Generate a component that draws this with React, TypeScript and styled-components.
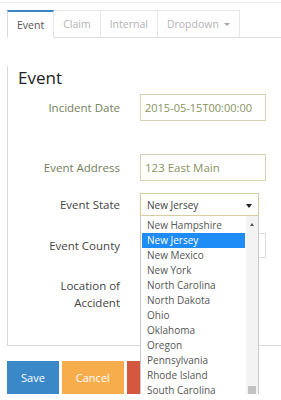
import styled, { createGlobalStyle } from "styled-components";

const GlobalStyle = createGlobalStyle`
    html, body {
        margin: 0;
        padding: 0;
        background: #fff;
        overflow: hidden;
    }

    body {
        font-family: "Open Sans", "DejaVu Sans", sans-serif;
        font-size: 11px;
        color: #444;
    }
`;

const states = [
    "New Hampshire",
    "New Jersey",
    "New Mexico",
    "New York",
    "North Carolina",
    "North Dakota",
    "Ohio",
    "Oklahoma",
    "Oregon",
    "Pennsylvania",
    "Rhode Island",
    "South Carolina",
];

const tabs = ["Event", "Claim", "Internal", "Dropdown"];

export default function App() {
    return (
        <>
            <GlobalStyle/>
            <TopRule/>
            <Page>
                <TabList>
                    {tabs.map((t, i) => (
                        <Tab key={t} $active={i === 0}>
                            {t}
                            {t === "Dropdown" && <Caret/>}
                        </Tab>
                    ))}
                </TabList>

                <Panel>
                    <Heading>Event</Heading>

                    <Row $top={5} $height={27}>
                        <Label $tone="olive">Incident Date</Label>
                        <TextInput $tone="olive" readOnly value="2015-05-15T00:00:00"/>
                    </Row>

                    <Row $top={33} $height={27}>
                        <Label $tone="olive">Event Address</Label>
                        <TextInput $tone="olive" $size={11.5} readOnly value="123 East Main"/>
                    </Row>

                    <Row $top={12} $height={23}>
                        <Label>Event State</Label>
                        <SelectWrap>
                            <SelectBox>
                                New Jersey
                                <SelectArrow/>
                            </SelectBox>
                            <OptionList>
                                {states.map((s) => (
                                    <Option key={s} $selected={s === "New Jersey"}>{s}</Option>
                                ))}
                                <ScrollTrack>
                                    <ScrollUp/>
                                    <ScrollThumb/>
                                </ScrollTrack>
                            </OptionList>
                        </SelectWrap>
                    </Row>

                    <Row $top={17} $height={25}>
                        <Label>Event County</Label>
                        <TextInput readOnly value=""/>
                    </Row>

                    <Row $top={19} $height={34}>
                        <Label>Location of Accident</Label>
                    </Row>
                </Panel>

                <Buttons>
                    <Button $bg="#3b88c8">Save</Button>
                    <Button $bg="#f7ad4c">Cancel</Button>
                    <Button $bg="#d4573f" $width={60}/>
                </Buttons>
            </Page>
        </>
    );
}

const TopRule = styled.div`
    height: 2px;
    border-bottom: 1px solid #ececec;
`;

const Page = styled.div`
    padding: 7px 0 0 7px;
`;

const TabList = styled.ul`
    display: flex;
    margin: 0;
    padding: 0;
    list-style: none;
    border-bottom: 1px solid #dedede;
    height: 27px;
`;

const Tab = styled.li<{ $active?: boolean }>`
    box-sizing: border-box;
    height: 28px;
    display: flex;
    align-items: center;
    padding: 0 9px;
    margin-bottom: -1px;
    font-size: 10.5px;
    border: 1px solid #e6e6e6;
    border-left: ${p => p.$active ? "1px solid #dadada" : "none"};
    border-top: ${p => p.$active ? "2px solid #3a87c8" : "1px solid #e6e6e6"};
    border-bottom: 1px solid ${p => p.$active ? "#fff" : "#dedede"};
    color: ${p => p.$active ? "#555" : "#b3b3b3"};
    background: #fff;
    white-space: nowrap;
`;

const Caret = styled.span`
    display: inline-block;
    margin-left: 5px;
    width: 0;
    height: 0;
    border-left: 3px solid transparent;
    border-right: 3px solid transparent;
    border-top: 3px solid #a8a8a8;
`;

const Panel = styled.div`
    border-left: 1px solid #dadada;
    border-bottom: 1px solid #dadada;
    padding: 0 0 34px 10px;
`;

const Heading = styled.h2`
    margin: 28px 0 0;
    font-size: 17px;
    line-height: 23px;
    font-weight: 400;
    color: #222;
`;

const Row = styled.div<{ $top: number; $height: number }>`
    display: flex;
    align-items: center;
    gap: 20px;
    margin-top: ${p => p.$top}px;
    height: ${p => p.$height}px;
`;

const Label = styled.label<{ $tone?: "olive" }>`
    flex: 0 0 102px;
    text-align: right;
    font-size: 11.5px;
    line-height: 17px;
    color: ${p => p.$tone === "olive" ? "#737e5c" : "#444"};
`;

const TextInput = styled.input<{ $tone?: "olive"; $size?: number }>`
    box-sizing: border-box;
    width: 126px;
    height: 100%;
    padding: 0 4px;
    margin: 0;
    font: inherit;
    font-size: ${p => p.$size ?? 11}px;
    color: ${p => p.$tone === "olive" ? "#89925e" : "#555"};
    border: 1px solid ${p => p.$tone === "olive" ? "#d5d3b2" : "#dcdcdc"};
    border-radius: 0;
    outline: none;
    background: #fff;
`;

const SelectWrap = styled.div`
    position: relative;
    width: 119px;
    height: 100%;
`;

const SelectBox = styled.div`
    box-sizing: border-box;
    height: 100%;
    display: flex;
    align-items: center;
    padding: 0 6px;
    font-size: 10px;
    color: #444;
    border: 1px solid #d9cca2;
    box-shadow: 0 1px 1px rgba(170, 150, 90, 0.25);
    position: relative;
`;

const SelectArrow = styled.span`
    position: absolute;
    right: 6px;
    top: 10px;
    width: 0;
    height: 0;
    border-left: 3px solid transparent;
    border-right: 3px solid transparent;
    border-top: 4px solid #222;
`;

const OptionList = styled.div`
    position: absolute;
    z-index: 10;
    top: 23px;
    left: 0;
    box-sizing: border-box;
    width: 119px;
    height: 200px;
    overflow: hidden;
    padding: 2px 13px 0 1px;
    background: #fff;
    border: 1px solid #c9c9c9;
    border-top: none;
`;

const Option = styled.div<{ $selected?: boolean }>`
    height: 15px;
    line-height: 15px;
    padding-left: 5px;
    font-size: 10px;
    color: ${p => p.$selected ? "#fff" : "#555"};
    background: ${p => p.$selected ? "#1e8cf6" : "transparent"};
    white-space: nowrap;
`;

const ScrollTrack = styled.div`
    position: absolute;
    top: 0;
    right: 0;
    width: 12px;
    height: 100%;
    background: #f3f3f3;
`;

const ScrollUp = styled.span`
    position: absolute;
    top: 7px;
    left: 4px;
    width: 0;
    height: 0;
    border-left: 2px solid transparent;
    border-right: 2px solid transparent;
    border-bottom: 3px solid #555;
`;

const ScrollThumb = styled.span`
    position: absolute;
    top: 170px;
    left: 2px;
    width: 8px;
    height: 30px;
    background: #c3c3c3;
`;

const Buttons = styled.div`
    display: flex;
    gap: 3px;
    margin-top: 15px;
`;

const Button = styled.button<{ $bg: string; $width?: number }>`
    height: 33px;
    width: ${p => p.$width ? `${p.$width}px` : "auto"};
    padding: 0 14px;
    border: none;
    border-radius: 0;
    font: inherit;
    font-size: 11px;
    color: #fff;
    background: ${p => p.$bg};
`;
